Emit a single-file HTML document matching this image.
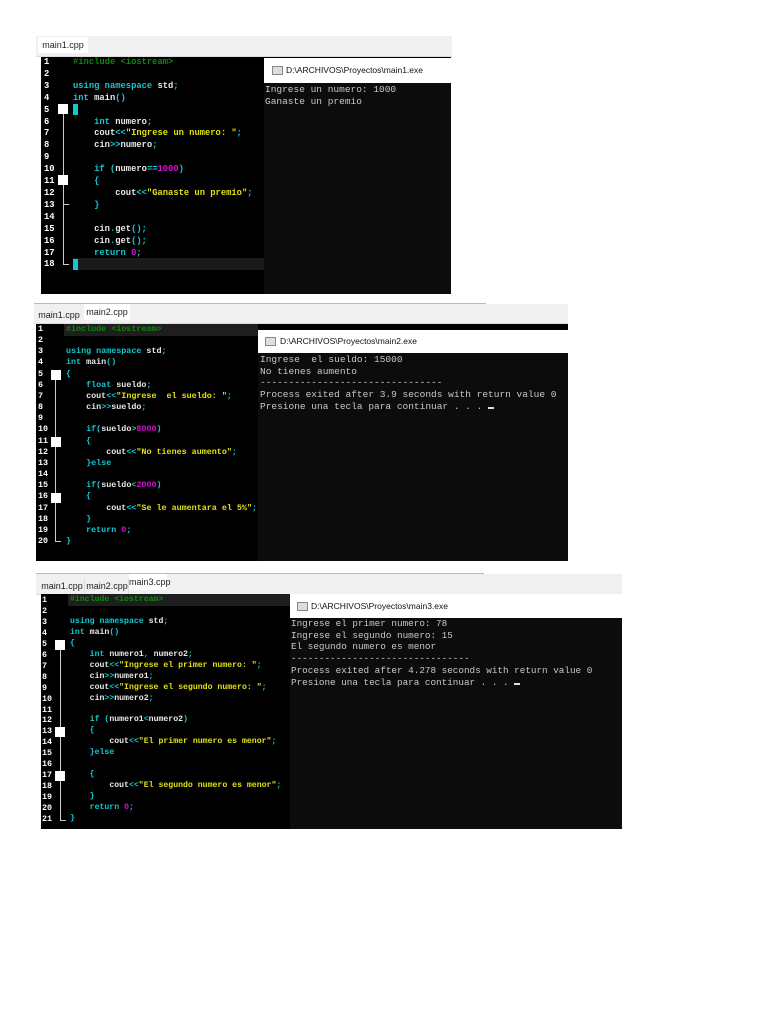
<!DOCTYPE html>
<html><head><meta charset="utf-8"><style>
body{margin:0;background:#fff;width:768px;height:1024px;position:relative;overflow:hidden;font-family:"Liberation Mono",monospace}
.a{position:absolute}
pre{margin:0;position:absolute;font-family:"Liberation Mono",monospace;white-space:pre}
.tabbar{background:#f0f0f0;border-bottom:1px solid #ddd}
.tab{position:absolute;font-family:"Liberation Sans",sans-serif;font-size:9px;color:#222;padding:3px 0;text-align:center}
.ed{background:#000}
.ln{color:#fff;font-weight:bold}
.k{color:#10c8d0}.t{color:#e8e8e8}.s{color:#e0e010}.n{color:#d010d0}.g{color:#0a8a0a}.p{color:#10c8d0}
.con{background:#0c0c0c;color:#c8c8c8}
.title{background:#fff;font-family:"Liberation Sans",sans-serif;font-size:9px;color:#111}
.sq{position:absolute;width:10px;height:10px;background:#fff}
.vl{position:absolute;width:1px;background:#ccc}
.ico{position:absolute;width:9px;height:7px;border:1px solid #888;background:#ddd}
</style></head><body>

<!-- Panel 1 -->
<div class="a tabbar" style="left:36px;top:36px;width:416px;height:20px"></div>
<div class="tab" style="left:38px;top:37px;width:50px;background:#fff">main1.cpp</div>
<div class="a ed" style="left:41px;top:57px;width:410px;height:237px"></div>
<div class="a" style="left:73px;top:258px;width:192px;height:12px;background:#1a1a1a"></div>
<pre class="ln" style="left:44px;top:57px;font-size:8.8px;line-height:11.9px">1
2
3
4
5
6
7
8
9
10
11
12
13
14
15
16
17
18</pre>
<div class="vl" style="left:63px;top:114px;height:150px"></div>
<div class="a" style="left:63px;top:264px;width:6px;height:1px;background:#ccc"></div>
<div class="a" style="left:63px;top:204px;width:6px;height:1px;background:#ccc"></div>
<div class="sq" style="left:58px;top:104px"></div>
<div class="sq" style="left:58px;top:175px"></div>
<div class="a" style="left:73px;top:104px;width:5px;height:11px;background:#10c8d0"></div>
<div class="a" style="left:73px;top:259px;width:5px;height:11px;background:#10c8d0"></div>
<pre style="left:73px;top:57px;font-size:8.8px;line-height:11.9px;font-weight:bold"><span class="g">#include &lt;iostream&gt;</span>

<span class="k">using namespace</span> <span class="t">std</span><span class="p">;</span>
<span class="k">int</span> <span class="t">main</span><span class="p">()</span>
<span class="p">{</span>
    <span class="k">int</span> <span class="t">numero</span><span class="p">;</span>
    <span class="t">cout</span><span class="p">&lt;&lt;</span><span class="s">"Ingrese un numero: "</span><span class="p">;</span>
    <span class="t">cin</span><span class="p">&gt;&gt;</span><span class="t">numero</span><span class="p">;</span>

    <span class="k">if</span> <span class="p">(</span><span class="t">numero</span><span class="p">==</span><span class="n">1000</span><span class="p">)</span>
    <span class="p">{</span>
        <span class="t">cout</span><span class="p">&lt;&lt;</span><span class="s">"Ganaste un premio"</span><span class="p">;</span>
    <span class="p">}</span>

    <span class="t">cin</span><span class="p">.</span><span class="t">get</span><span class="p">();</span>
    <span class="t">cin</span><span class="p">.</span><span class="t">get</span><span class="p">();</span>
    <span class="k">return</span> <span class="n">0</span><span class="p">;</span>
<span class="p">}</span></pre>
<div class="a title" style="left:264px;top:58px;width:187px;height:25px"></div>
<div class="ico" style="left:272px;top:66px"></div>
<div class="a title" style="left:286px;top:65px;font-size:8.5px">D:\ARCHIVOS\Proyectos\main1.exe</div>
<div class="a con" style="left:264px;top:83px;width:187px;height:211px"></div>
<pre class="con" style="left:265px;top:84px;font-size:9.5px;line-height:12px;background:none">Ingrese un numero: 1000
Ganaste un premio</pre>

<!-- Panel 2 -->
<div class="a tabbar" style="left:34px;top:304px;width:534px;height:19px"></div>
<div class="a" style="left:34px;top:303px;width:452px;height:1px;background:#bbb"></div>
<div class="tab" style="left:36px;top:307px;width:46px">main1.cpp</div>
<div class="tab" style="left:84px;top:304px;width:46px;background:#fff">main2.cpp</div>
<div class="a ed" style="left:36px;top:324px;width:532px;height:237px"></div>
<div class="a" style="left:64px;top:324px;width:194px;height:12px;background:#1e1e1e"></div>
<pre class="ln" style="left:38px;top:324px;font-size:8.4px;line-height:11.16px">1
2
3
4
5
6
7
8
9
10
11
12
13
14
15
16
17
18
19
20</pre>
<div class="vl" style="left:55px;top:378px;height:163px"></div>
<div class="a" style="left:55px;top:541px;width:6px;height:1px;background:#ccc"></div>
<div class="sq" style="left:51px;top:370px"></div>
<div class="sq" style="left:51px;top:437px"></div>
<div class="sq" style="left:51px;top:493px"></div>
<pre style="left:66px;top:324px;font-size:8.4px;line-height:11.16px;font-weight:bold"><span class="g">#include &lt;iostream&gt;</span>

<span class="k">using namespace</span> <span class="t">std</span><span class="p">;</span>
<span class="k">int</span> <span class="t">main</span><span class="p">()</span>
<span class="p">{</span>
    <span class="k">float</span> <span class="t">sueldo</span><span class="p">;</span>
    <span class="t">cout</span><span class="p">&lt;&lt;</span><span class="s">"Ingrese  el sueldo: "</span><span class="p">;</span>
    <span class="t">cin</span><span class="p">&gt;&gt;</span><span class="t">sueldo</span><span class="p">;</span>

    <span class="k">if</span><span class="p">(</span><span class="t">sueldo</span><span class="p">&gt;</span><span class="n">8000</span><span class="p">)</span>
    <span class="p">{</span>
        <span class="t">cout</span><span class="p">&lt;&lt;</span><span class="s">"No tienes aumento"</span><span class="p">;</span>
    <span class="p">}</span><span class="k">else</span>

    <span class="k">if</span><span class="p">(</span><span class="t">sueldo</span><span class="p">&lt;</span><span class="n">2000</span><span class="p">)</span>
    <span class="p">{</span>
        <span class="t">cout</span><span class="p">&lt;&lt;</span><span class="s">"Se le aumentara el 5%"</span><span class="p">;</span>
    <span class="p">}</span>
    <span class="k">return</span> <span class="n">0</span><span class="p">;</span>
<span class="p">}</span></pre>
<div class="a title" style="left:258px;top:330px;width:310px;height:23px"></div>
<div class="ico" style="left:265px;top:337px"></div>
<div class="a title" style="left:280px;top:336px;font-size:8.5px">D:\ARCHIVOS\Proyectos\main2.exe</div>
<div class="a con" style="left:258px;top:353px;width:310px;height:208px"></div>
<pre class="con" style="left:260px;top:354px;font-size:9.5px;line-height:11.7px;background:none">Ingrese  el sueldo: 15000
No tienes aumento
--------------------------------
Process exited after 3.9 seconds with return value 0
Presione una tecla para continuar . . . <span style="display:inline-block;width:6px;height:2px;background:#ddd"></span></pre>

<!-- Panel 3 -->
<div class="a tabbar" style="left:36px;top:574px;width:586px;height:20px"></div>
<div class="a" style="left:36px;top:573px;width:448px;height:1px;background:#bbb"></div>
<div class="tab" style="left:40px;top:578px;width:44px;border-right:1px solid #ddd">main1.cpp</div>
<div class="tab" style="left:86px;top:578px;width:42px;border-right:1px solid #ddd">main2.cpp</div>
<div class="tab" style="left:129px;top:574px;width:38px;background:#fff">main3.cpp</div>
<div class="a ed" style="left:41px;top:594px;width:581px;height:235px"></div>
<div class="a" style="left:68px;top:594px;width:222px;height:12px;background:#1e1e1e"></div>
<pre class="ln" style="left:42px;top:595px;font-size:8.4px;line-height:10.95px">1
2
3
4
5
6
7
8
9
10
11
12
13
14
15
16
17
18
19
20
21</pre>
<div class="vl" style="left:60px;top:650px;height:170px"></div>
<div class="a" style="left:60px;top:820px;width:6px;height:1px;background:#ccc"></div>
<div class="sq" style="left:55px;top:640px"></div>
<div class="sq" style="left:55px;top:727px"></div>
<div class="sq" style="left:55px;top:771px"></div>
<pre style="left:70px;top:595px;font-size:8.2px;line-height:10.95px;font-weight:bold"><span class="g">#include &lt;iostream&gt;</span>

<span class="k">using namespace</span> <span class="t">std</span><span class="p">;</span>
<span class="k">int</span> <span class="t">main</span><span class="p">()</span>
<span class="p">{</span>
    <span class="k">int</span> <span class="t">numero1</span><span class="p">,</span> <span class="t">numero2</span><span class="p">;</span>
    <span class="t">cout</span><span class="p">&lt;&lt;</span><span class="s">"Ingrese el primer numero: "</span><span class="p">;</span>
    <span class="t">cin</span><span class="p">&gt;&gt;</span><span class="t">numero1</span><span class="p">;</span>
    <span class="t">cout</span><span class="p">&lt;&lt;</span><span class="s">"Ingrese el segundo numero: "</span><span class="p">;</span>
    <span class="t">cin</span><span class="p">&gt;&gt;</span><span class="t">numero2</span><span class="p">;</span>

    <span class="k">if</span> <span class="p">(</span><span class="t">numero1</span><span class="p">&lt;</span><span class="t">numero2</span><span class="p">)</span>
    <span class="p">{</span>
        <span class="t">cout</span><span class="p">&lt;&lt;</span><span class="s">"El primer numero es menor"</span><span class="p">;</span>
    <span class="p">}</span><span class="k">else</span>

    <span class="p">{</span>
        <span class="t">cout</span><span class="p">&lt;&lt;</span><span class="s">"El segundo numero es menor"</span><span class="p">;</span>
    <span class="p">}</span>
    <span class="k">return</span> <span class="n">0</span><span class="p">;</span>
<span class="p">}</span></pre>
<div class="a title" style="left:290px;top:594px;width:332px;height:24px"></div>
<div class="ico" style="left:297px;top:602px"></div>
<div class="a title" style="left:311px;top:601px;font-size:8.5px">D:\ARCHIVOS\Proyectos\main3.exe</div>
<div class="a con" style="left:290px;top:618px;width:332px;height:211px"></div>
<pre class="con" style="left:291px;top:618px;font-size:9.3px;line-height:11.7px;background:none">Ingrese el primer numero: 78
Ingrese el segundo numero: 15
El segundo numero es menor
--------------------------------
Process exited after 4.278 seconds with return value 0
Presione una tecla para continuar . . . <span style="display:inline-block;width:6px;height:2px;background:#ddd"></span></pre>

</body></html>
